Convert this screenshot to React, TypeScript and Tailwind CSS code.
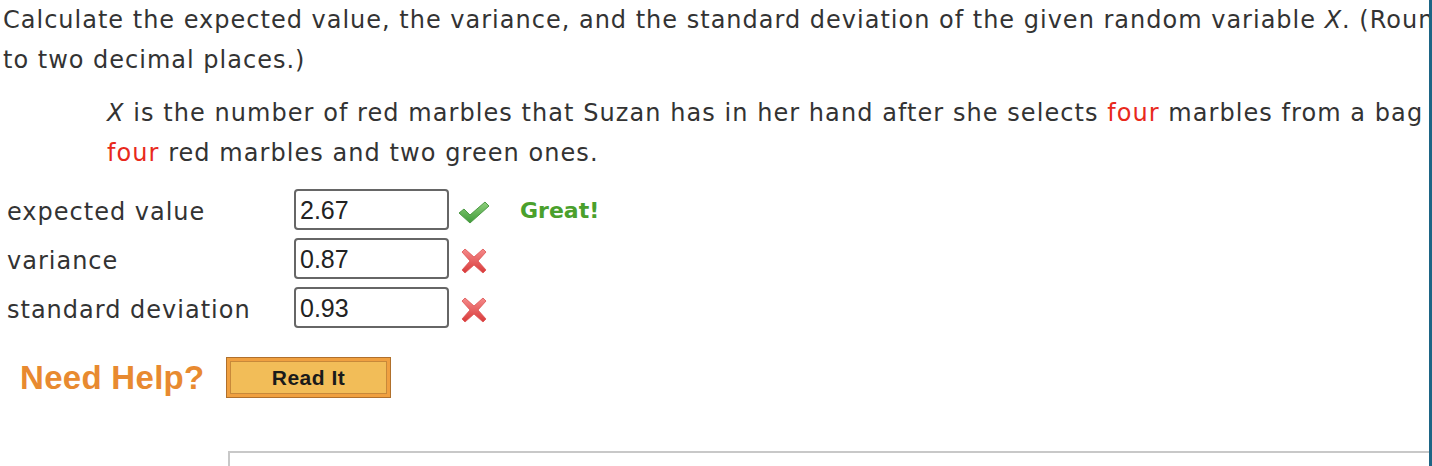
import React from 'react';

const Check = () => (
  <svg width="34" height="26" viewBox="0 0 34 26">
    <defs>
      <linearGradient id="ck" x1="0" y1="0" x2="0" y2="1">
        <stop offset="0" stopColor="#8fd07c" />
        <stop offset="1" stopColor="#3f9a3a" />
      </linearGradient>
    </defs>
    <path d="M2 14 L7 10 L13 16 L28 3 L32 7 L13 24 Z" fill="url(#ck)" stroke="#4d9a45" strokeWidth="1" strokeLinejoin="round" />
  </svg>
);

const Cross = () => (
  <svg width="28" height="28" viewBox="0 0 28 28">
    <defs>
      <linearGradient id="cx" x1="0" y1="0" x2="0" y2="1">
        <stop offset="0" stopColor="#f58a8a" />
        <stop offset="1" stopColor="#d83a3a" />
      </linearGradient>
    </defs>
    <path d="M5 2 L14 10 L23 2 L26 5 L18 14 L26 23 L23 26 L14 18 L5 26 L2 23 L10 14 L2 5 Z" fill="url(#cx)" stroke="#dd5050" strokeWidth="0.8" strokeLinejoin="round" />
  </svg>
);

type Row = { label: string; value: string; ok: boolean };

const rows: Row[] = [
  { label: 'expected value', value: '2.67', ok: true },
  { label: 'variance', value: '0.87', ok: false },
  { label: 'standard deviation', value: '0.93', ok: false },
];

export default function App() {
  return (
    <div className="w-[1432px] h-[466px] bg-white flex overflow-hidden">
      <div className="w-[1429px] h-full overflow-hidden text-[#333] text-[24px] leading-[40px] tracking-[1px] font-['DejaVu_Sans','Verdana',sans-serif]">
        {/* question */}
        <div className="pl-[3px]">
          <div className="whitespace-nowrap">
            Calculate the expected value, the variance, and the standard deviation of the given random variable <i>X</i>. (Round
          </div>
          <div>to two decimal places.)</div>
        </div>

        <div className="pl-[107px] mt-[13px] tracking-[1.06px]">
          <div className="whitespace-nowrap">
            <i>X</i> is the number of red marbles that Suzan has in her hand after she selects{' '}
            <span className="text-[#e8291c]">four</span> marbles from a bag
          </div>
          <div>
            <span className="text-[#e8291c]">four</span> red marbles and two green ones.
          </div>
        </div>

        {/* answers */}
        <div className="mt-[16px] flex flex-col gap-[8px]">
          {rows.map((r) => (
            <div key={r.label} className="flex items-center h-[41px]">
              <div className="w-[294px] pl-[7px] pt-[4px]">{r.label}</div>
              <div className="w-[155px] h-[41px] border-2 border-[#666] rounded-[4px] pl-[4px] flex items-center text-[25px] tracking-normal text-[#222] font-['Liberation_Sans','Arial',sans-serif]">
                {r.value}
              </div>
              <div className="w-[50px] flex justify-center pt-[4px]">{r.ok ? <Check /> : <Cross />}</div>
              {r.ok && (
                <span className="ml-[21px] pt-[3px] text-[22px] tracking-normal font-bold text-[#4aa02c]">Great!</span>
              )}
            </div>
          ))}
        </div>

        {/* help */}
        <div className="mt-[29px] flex items-center">
          <span className="pl-[20px] w-[226px] text-[33px] tracking-[0.3px] font-bold text-[#e88a30] font-['Liberation_Sans','Arial',sans-serif]">
            Need Help?
          </span>
          <button className="w-[165px] h-[41px] bg-[#f0a040] border border-[#b0702c] p-[3px]">
            <span className="flex items-center justify-center h-full border border-[#c8893a] bg-[#f2bd58] text-[21px] tracking-[0.5px] leading-none font-bold text-[#1a1a1a] font-['Liberation_Sans','Arial',sans-serif]">
              Read It
            </span>
          </button>
        </div>

        <div className="mt-[53px] ml-[228px] h-[40px] border-t-2 border-l-2 border-[#c8c8c8]" />
      </div>
      <div className="w-[3px] h-full bg-[#1d6585]" />
    </div>
  );
}
